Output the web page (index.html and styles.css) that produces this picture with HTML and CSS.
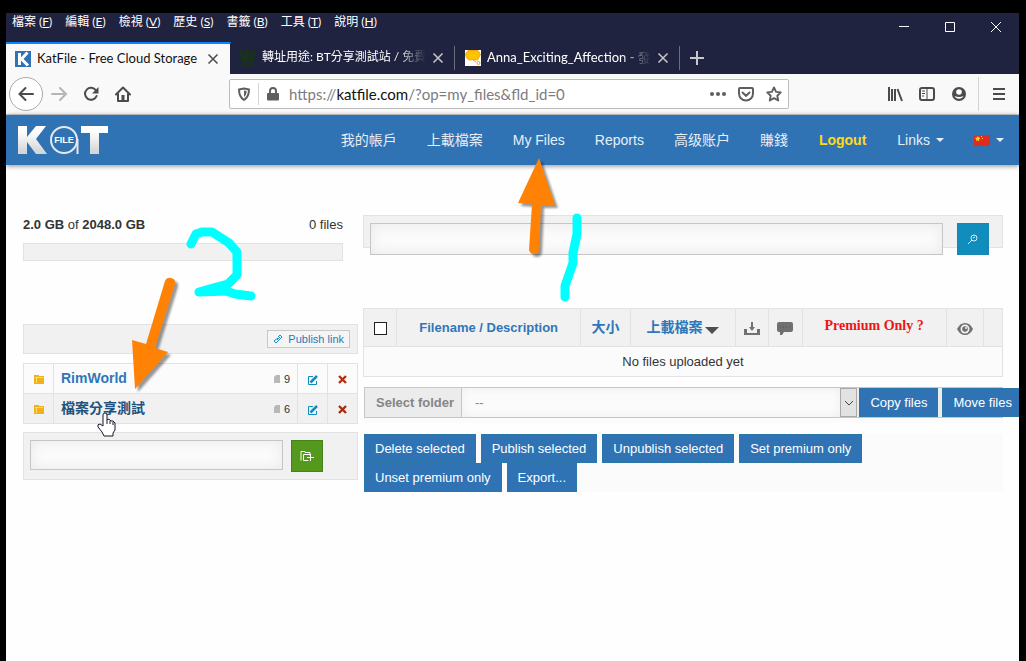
FILE: index.html
```html
<!DOCTYPE html>
<html lang="zh-Hant">
<head>
<meta charset="utf-8">
<title>KatFile - Free Cloud Storage</title>
<link rel="stylesheet" href="styles.css">
</head>
<body>
<div class="window">
  <header class="chrome">
    <div class="titlebar">
      <nav class="menus">
        <button>檔案 (<u>F</u>)</button><button>編輯 (<u>E</u>)</button><button>檢視 (<u>V</u>)</button><button>歷史 (<u>S</u>)</button><button>書籤 (<u>B</u>)</button><button>工具 (<u>T</u>)</button><button>說明 (<u>H</u>)</button>
      </nav>
      <div class="controls">
        <button aria-label="Minimize"><svg width="12" height="12"><path d="M1 5.5h10" stroke="#fff"/></svg></button>
        <button aria-label="Maximize"><svg width="12" height="12"><path d="M1.5 1.5h9v9h-9z" fill="none" stroke="#fff"/></svg></button>
        <button aria-label="Close"><svg width="12" height="12"><path d="M1 1l10 10M11 1L1 11" stroke="#fff"/></svg></button>
      </div>
    </div>
    <div class="tabs">
      <div class="tab active">
        <svg class="favicon" width="16" height="16"><path fill="#2f72b5" d="M0 0h16v16H0z"/><path fill="none" stroke="#fff" stroke-width="3" d="M4.500 2v12M12.500 1.500L6.500 8l6.500 6.500"/></svg>
        <span class="tab-title">KatFile - Free Cloud Storage</span>
        <button class="tab-close" aria-label="Close tab"><svg width="12" height="12"><path d="M1.500 1.500l9 9M10.500 1.500l-9 9" stroke="#4a4a4f" stroke-width="1.500"/></svg></button>
      </div>
      <div class="tab">
        <svg class="favicon" width="16" height="16"><path fill="none" stroke="#193414" stroke-width="2" d="M1 1.500h5v4H1zM9 1.500h5v4H9zM1 8h13M3 10.500h10v4H3zM7.500 1v7"/></svg>
        <span class="tab-title fade small">轉址用途: BT分享測試站 / 免費</span>
        <button class="tab-close" aria-label="Close tab"><svg width="12" height="12"><path d="M1.500 1.500l9 9M10.500 1.500l-9 9" stroke="#c8c8cc" stroke-width="1.500"/></svg></button>
      </div>
      <div class="tab">
        <svg class="favicon" width="16" height="16"><path fill="#fff" d="M0 0h16v16H0z"/><path fill="#ffc400" stroke="#f6a313" d="M3 .5h10l2.500 4-2 3.500-1 2-4-.5-4 .5-3-2-1-4z"/><circle cx="13.500" cy="13" r="1.500" fill="#fff" stroke="#f6a313"/><path d="M8 10l3 2" stroke="#f6a313"/></svg>
        <span class="tab-title fade">Anna_Exciting_Affection - 發</span>
        <button class="tab-close" aria-label="Close tab"><svg width="12" height="12"><path d="M1.500 1.500l9 9M10.500 1.500l-9 9" stroke="#c8c8cc" stroke-width="1.500"/></svg></button>
      </div>
      <button class="newtab" aria-label="New tab"><svg width="14" height="14"><path d="M7 0v14M0 7h14" stroke="#c8c8cc" stroke-width="2"/></svg></button>
    </div>
    <div class="toolbar">
      <div class="history">
        <button class="back" aria-label="Back"><svg width="18" height="16"><path d="M8.500 2L2.500 8l6 6M3 8h13" fill="none" stroke="#4a4a4f" stroke-width="2" stroke-linecap="round"/></svg></button>
        <button aria-label="Forward"><svg width="18" height="16"><path d="M10 2l6 6-6 6M15.500 8H2" fill="none" stroke="#b5b5b8" stroke-width="2" stroke-linecap="round"/></svg></button>
        <button aria-label="Reload"><svg width="16" height="16"><path d="M13 4.500A6 6 0 1 0 13.600 10" fill="none" stroke="#4a4a4f" stroke-width="2" stroke-linecap="round"/><path d="M15.500 1v6.500H9z" fill="#4a4a4f"/></svg></button>
        <button aria-label="Home"><svg width="18" height="16"><path d="M2 8.500L9 1.500l7 7M4 8v7h10V8" fill="none" stroke="#4a4a4f" stroke-width="2" stroke-linecap="round" stroke-linejoin="round"/><path d="M7.500 9h3v5h-3z" fill="#4a4a4f"/></svg></button>
      </div>
      <div class="address">
        <button class="shield" aria-label="Tracking protection"><svg width="14" height="16"><path d="M7 2.500l5 1c0 5-1 8-5 10.500C3 11.500 2 8.500 2 3.500z" fill="none" stroke="#5e5e62" stroke-width="2" stroke-linejoin="round"/><path d="M7 4.500v6.500c2-1.500 2.500-3 2.600-6z" fill="#5e5e62"/></svg></button>
        <svg class="lock" width="14" height="16"><rect x="1" y="7" width="12" height="7.500" rx="1" fill="#5e5e62"/><path d="M4 8V5a3 3 0 0 1 6 0v3" fill="none" stroke="#5e5e62" stroke-width="2"/></svg>
        <a class="url" href="#">https://<b>katfile.com</b>/?op=my_files&amp;fld_id=0</a>
        <div class="page-actions">
          <button aria-label="Page actions"><svg width="18" height="16" fill="#5e5e62"><circle cx="3" cy="8" r="2"/><circle cx="9" cy="8" r="2"/><circle cx="15" cy="8" r="2"/></svg></button>
          <button aria-label="Save to Pocket"><svg width="18" height="16" fill="none" stroke="#5e5e62" stroke-width="2" stroke-linecap="round"><path d="M3 2h12q1 0 1 1v4.500a7 7 0 0 1-14 0V3q0-1 1-1z"/><path d="M5.500 6.500L9 9.800l3.500-3.300"/></svg></button>
          <button aria-label="Bookmark"><svg width="18" height="16" viewBox="0 0 18 17"><path d="M9 1.500l2.200 4.700 5 .6-3.700 3.500 1 5.100L9 12.900l-4.500 2.500 1-5.100-3.700-3.500 5-.6z" fill="none" stroke="#5e5e62" stroke-width="2" stroke-linejoin="round"/></svg></button>
        </div>
      </div>
      <div class="tools">
        <button aria-label="Library"><svg width="16" height="16"><path d="M2 1v14M5 3v12M8 3v12M10.500 3L15 15" stroke="#4a4a4f" stroke-width="2"/></svg></button>
        <button aria-label="Sidebar"><svg width="16" height="16"><rect x="1" y="2" width="14" height="12" rx="2" fill="none" stroke="#4a4a4f" stroke-width="2"/><path d="M8 2v12M3 5h3M3 7.500h3M3 10h2" stroke="#4a4a4f"/></svg></button>
        <button aria-label="Account"><svg width="16" height="16"><circle cx="8" cy="8" r="7" fill="#4a4a4f"/><circle cx="8" cy="6" r="2.800" fill="#fff"/><path d="M3.500 10q1.200 2.800 4.500 2.800t4.500-2.800q-2 1-4.500 1t-4.500-1z" fill="#fff"/></svg></button>
        <button class="hamburger" aria-label="Open menu"><svg width="14" height="16"><path d="M1 3h12M1 8h12M1 13h12" stroke="#4a4a4f" stroke-width="2"/></svg></button>
      </div>
    </div>
  </header>

  <div class="site-nav">
    <a class="logo" href="#" aria-label="KatFile">
      <svg width="92" height="32">
        <defs><linearGradient id="metal" x1="0" y1="0" x2="0" y2="1"><stop offset="0.200" stop-color="#fff"/><stop offset="0.900" stop-color="#d4d7da"/></linearGradient></defs>
        <path fill="url(#metal)" d="M1 2h9v11L19 2h10L19 15l11 15H19l-9-12v12H1zM64 2h27v7H82v21h-9V9h-9z"/>
        <circle cx="47" cy="16" r="13" fill="none" stroke="#e6e9ec" stroke-width="2"/>
        <path d="M60.500 15v15" stroke="#e6e9ec" stroke-width="2"/>
        <text x="47" y="19" text-anchor="middle" class="logo-file">FILE</text>
      </svg>
    </a>
    <nav class="links">
      <a href="#">我的帳戶</a><a href="#">上載檔案</a><a href="#">My Files</a><a href="#">Reports</a><a href="#">高级账户</a><a href="#">賺錢</a><a href="#" class="logout">Logout</a>
      <a href="#">Links<i class="caret"></i></a>
      <a href="#" aria-label="中文"><svg width="16" height="11"><path fill="#e22a20" d="M0 0h16v11H0z"/><path fill="#ffd42a" d="M1 3l2-.4L4 1l.8 1.600 1.700.4L5 4.300l.3 2L3.600 5.200 2 6l.4-1.800zM7 1h1v1H7zM8 3h1v1H8z"/></svg><i class="caret"></i></a>
    </nav>
  </div>

  <main class="content">
    <aside class="side">
      <div class="usage"><span><b>2.0 GB</b> of <b>2048.0 GB</b></span><span>0 files</span></div>
      <div class="quota"></div>
      <div class="panel publish">
        <button class="publish-link"><svg width="10" height="10" fill="none" stroke="#1a8fc0"><path d="M4 6l3-3M5 3l2-2 2 2-3 3M5 4L1 7l2 2 3-3"/></svg>Publish link</button>
      </div>
      <table class="folders">
        <tr>
          <td class="folder-icon"><svg width="10" height="9"><path fill="#f1b213" d="M0 0h5v1h5v8H0z"/><path d="M1 2.500h8M2.500 3v5" fill="none" stroke="#fbd877"/></svg></td>
          <td><a href="#">RimWorld</a></td>
          <td class="count"><svg width="6" height="8"><path fill="#b8b8b8" d="M2 0h4v8H0V2z"/></svg>9</td>
          <td class="act"><button aria-label="Edit RimWorld"><svg width="10" height="10" fill="none" stroke="#0e8cc0"><path d="M5 1.500H.5v8h8V6"/><path stroke-width="2.500" d="M2.500 7.500L9 1"/></svg></button></td>
          <td class="act"><button aria-label="Delete RimWorld"><svg width="9" height="9"><path d="M1 1l7 7M8 1L1 8" stroke="#b23112" stroke-width="2.400"/></svg></button></td>
        </tr>
        <tr>
          <td class="folder-icon"><svg width="10" height="9"><path fill="#f1b213" d="M0 0h5v1h5v8H0z"/><path d="M1 2.500h8M2.500 3v5" fill="none" stroke="#fbd877"/></svg></td>
          <td><a href="#" class="hovered">檔案分享測試</a></td>
          <td class="count"><svg width="6" height="8"><path fill="#b8b8b8" d="M2 0h4v8H0V2z"/></svg>6</td>
          <td class="act"><button aria-label="Edit folder"><svg width="10" height="10" fill="none" stroke="#0e8cc0"><path d="M5 1.500H.5v8h8V6"/><path stroke-width="2.500" d="M2.500 7.500L9 1"/></svg></button></td>
          <td class="act"><button aria-label="Delete folder"><svg width="9" height="9"><path d="M1 1l7 7M8 1L1 8" stroke="#a22e13" stroke-width="2.400"/></svg></button></td>
        </tr>
      </table>
      <form class="panel new-folder">
        <input class="field" type="text" aria-label="New folder name">
        <button class="create" type="button" aria-label="Create folder"><svg width="14" height="11" fill="none" stroke="#fff"><path d="M1 9.500v-9h4v1h5v3M3.500 9.500v-6H10M3.500 9.500h5"/><path d="M7 6.500h7M10.500 3v7"/></svg></button>
      </form>
    </aside>

    <section class="files">
      <form class="search">
        <input class="field" type="text" aria-label="Search files">
        <button class="go" type="button" aria-label="Search"><svg width="10" height="10" fill="none" stroke="#d8f0f8"><circle cx="6" cy="4" r="3"/><path d="M0 10l4-4M5 4l2-1"/></svg></button>
      </form>
      <table class="list">
        <colgroup><col class="w5"><col class="w29"><col class="w8"><col class="w16"><col class="w5"><col class="w5"><col class="w23"><col class="w6"><col class="w3"></colgroup>
        <tr>
          <th><input type="checkbox" aria-label="Select all"></th>
          <th><a href="#">Filename / Description</a></th>
          <th><a href="#" class="cjk">大小</a></th>
          <th><a href="#" class="cjk">上載檔案<i class="sort"></i></a></th>
          <th><svg width="16" height="14" fill="#707073"><path d="M0 7h3v4h10V7h3v6H0zM7 0h2v5h2L8 9 5 5h2z"/></svg></th>
          <th><svg width="16" height="14" fill="#707073"><path d="M2 0h12q2 0 2 2v6q0 2-2 2H7l-2 3H3v-3H2Q0 10 0 8V2q0-2 2-2z"/><path d="M3 5h1M6 5h1M9 5h1M12 5h1" stroke="#555"/></svg></th>
          <th class="premium"><span>Premium Only</span> ?</th>
          <th><svg width="16" height="14"><path fill="#707073" d="M0 7q3-6 8-6t8 6q-3 6-8 6T0 7z"/><circle cx="8" cy="7" r="4.500" fill="#f1f1f1"/><circle cx="8" cy="7" r="2.800" fill="#707073"/><circle cx="9" cy="6" r="1" fill="#f1f1f1"/></svg></th>
          <th></th>
        </tr>
        <tr><td colspan="9">No files uploaded yet</td></tr>
      </table>
      <div class="move">
        <label for="folder">Select folder</label>
        <div class="select-wrap">
          <select id="folder"><option>--</option></select>
          <span class="arrow"><svg width="10" height="6"><path d="M1 1l4 4 4-4" fill="none" stroke="#444"/></svg></span>
        </div>
        <button class="btn">Copy files</button>
        <button class="btn">Move files</button>
      </div>
      <div class="actions">
        <div><button class="btn">Delete selected</button><button class="btn">Publish selected</button><button class="btn">Unpublish selected</button><button class="btn">Set premium only</button></div>
        <div><button class="btn">Unset premium only</button><button class="btn">Export...</button></div>
      </div>
    </section>
  </main>
</div>

<svg class="ink" width="700" height="470" aria-hidden="true">
  <g fill="#ff8205" class="arrows">
    <path d="M539 158L518 203l14 1-3 46q1 4 5 4t5-4l2-45 14 0z"/>
    <path d="M165 281q2-4 6-3 5 1 4 6l-20 64 13 4-33 37-3-49 14 4z"/>
  </g>
  <g fill="none" stroke="#0ff" stroke-width="9" stroke-linecap="round" stroke-linejoin="round">
    <path d="M191 244l5-10 6-2 10 0 17 11 8 9v23l-9 9-15 4-14 4 27-1 9 3 16 2"/>
    <path d="M577 218v16l-4 19v10l-8 23v11"/>
  </g>
  <path d="M103 426V415q0-2 2-2t2 2v5l1-1 2 1 1 1 2 0 1 1 1 1v7l-2 3v3h-9l-2-4-4-5q-1-3 2-3z" fill="#fff" stroke="#16162a"/>
  <path d="M107 420v4M110 421v3M113 422v3" stroke="#16162a"/>
</svg>
</body>
</html>
```

FILE: styles.css
```css
* { box-sizing: border-box; }
html { background: #000; }
body {
  margin: 0;
  padding: 13px 7px 0 6px;
  height: 100vh;
  overflow: hidden;
  font: 13px/20px "Liberation Sans", "Noto Sans CJK TC", sans-serif;
  color: #333;
}
button { font: inherit; color: inherit; background: none; border: 0; padding: 0; display: inline-flex; align-items: center; justify-content: center; }
a { color: #2f77b8; text-decoration: none; }
svg { display: block; flex: none; }
table { border-collapse: collapse; width: 100%; }

.window { display: flex; flex-direction: column; height: 100%; background: #fefefe; overflow: hidden; }
.chrome { background: #202340; color: #fff; font-family: Lato, "Noto Sans CJK TC", sans-serif; }
.titlebar { display: flex; justify-content: space-between; height: 29px; font-size: 12px; }
.menus { display: flex; gap: 13px; padding: 0 6px; height: 18px; line-height: 18px; white-space: nowrap; }
.menus button { display: block; }
.controls { display: flex; height: 28px; }
.controls button { width: 46px; }

.tabs { display: flex; height: 32px; }
.tab { display: flex; align-items: center; width: 225px; padding: 0 11px 0 9px; gap: 6px; border-right: 1px solid #202340; position: relative; }
.tab:nth-child(2)::after, .tab:nth-child(3)::after { content: ""; position: absolute; right: 0; top: 4px; bottom: 4px; width: 1px; background: #6c6d80; }
.tab.active { background: #f9f9fa; color: #111; border-top: 2px solid #0a84ff; }
.tab-title { flex: 1; overflow: hidden; white-space: nowrap; line-height: 18px; padding-bottom: 2px; }
.tab-title.small { font-size: 12px; }
.fade { -webkit-mask-image: linear-gradient(to left, transparent, #000 30px); mask-image: linear-gradient(to left, transparent, #000 30px); }
.newtab { width: 32px; }

.toolbar { display: flex; align-items: center; height: 41px; background: #f9f9fa; color: #4a4a4f; border-bottom: 1px solid #d2d2d4; }
.history { display: flex; align-items: center; width: 223px; flex: none; padding-left: 3px; }
.history button { width: 32px; height: 32px; }
.history .back { width: 34px; height: 34px; border: 1px solid #aaa; border-radius: 50%; background: #fff; }
.address { flex: none; width: 55.3%; display: flex; align-items: center; height: 30px; border: 1px solid #bcbcbe; border-radius: 2px; background: #fff; }
.shield { width: 29px; height: 22px; border-right: 1px solid #d4d4d6; }
.lock { margin: 0 9px 0 7px; }
.url { flex: 1; font-size: 15px; color: #7c7c80; white-space: nowrap; }
.url b { font-weight: 400; color: #111; }
.page-actions { display: flex; gap: 10px; padding-right: 5px; }
.tools { display: flex; flex: 1; justify-content: flex-end; align-items: center; gap: 16px; }
.hamburger { width: 41px; height: 34px; margin-left: -5px; border-left: 1px solid #d4d4d6; }

.site-nav { display: flex; align-items: center; justify-content: space-between; flex: none; height: 50px; padding-left: 11px; background: #2f73b5; box-shadow: 0 1px 5px rgba(0,0,0,.45); position: relative; }
.logo-file { font: bold 9px "Liberation Sans", sans-serif; fill: #fff; }
.links { display: flex; font-size: 14px; white-space: nowrap; }
.links a { display: flex; align-items: center; padding: 0 15px; color: #e8eef5; }
.links .logout { color: #ffd915; font-weight: 700; padding: 0 16px; }
.caret { border: 4px solid transparent; border-top-color: currentColor; border-bottom: 0; margin-left: 6px; }

.content { display: grid; grid-template-columns: 335fr 640fr; gap: 5px; padding: 50px 16px 0 17px; }
.usage { display: flex; justify-content: space-between; margin-right: 15px; }
.quota { height: 18px; margin: 8px 15px 63px 0; background: #f1f1f1; border: 1px solid #e2e2e2; }
.panel { background: #f1f1f1; border: 1px solid #e2e2e2; }
.publish { display: flex; justify-content: flex-end; height: 30px; padding: 5px 7px; }
.publish-link { gap: 5px; padding: 0 5px; border: 1px solid #c8c8c8; color: #2f77b8; font-size: 11px; background: #f5f5f5; height: 18px; }
.folders { margin: 9px 0 8px; background: #fbfbfb; border: 1px solid #e2e2e2; }
.folders tr { height: 30px; border-bottom: 1px solid #e2e2e2; }
.folders tr:last-child { background: #f1f1f1; }
.folders td { padding: 0 0 0 7px; }
.folders a { font-weight: 700; font-size: 14px; }
.folders .hovered { color: #23527c; }
.folders .folder-icon { width: 30px; padding: 2px 0 0 10px; border-right: 1px solid #e2e2e2; }
.folders .count { text-align: right; padding-right: 7px; font-size: 11px; }
.count svg { display: inline-block; margin-right: 4px; }
.folders .act { width: 30px; padding: 2px 0 0; text-align: center; border-left: 1px solid #e2e2e2; }
.act button { height: 20px; vertical-align: middle; }
.new-folder { display: flex; gap: 8px; height: 48px; padding: 7px 34px 7px 6px; }
.field { flex: 1; min-width: 0; height: 30px; border: 1px solid #c6c6c6; background: #fbfbfb; box-shadow: inset 0 0 14px #e8e8e8; padding: 0 8px; font: inherit; }
.create { width: 32px; height: 32px; background: #55991c; border: 1px solid #48821a; }

.search { display: flex; gap: 14px; height: 33px; padding: 7px 13px 0 6px; background: #f1f1f1; border: 1px solid #e2e2e2; }
.search .field { height: 32px; }
.go { width: 32px; height: 32px; flex: none; background: #108dbd; border: 1px solid #1786b0; }
.list { margin-top: 60px; table-layout: fixed; background: #fbfbfb; text-align: center; }
.list, .list th, .list td { border: 1px solid #e2e2e2; }
.list th { height: 38px; padding: 0; background: #f1f1f1; white-space: nowrap; }
.list td { height: 30px; padding: 0; }
.list th svg { margin: 3px auto 0; }
.list .cjk { font-size: 14px; }
.list input { appearance: none; width: 13px; height: 13px; margin: 0; border: 1px solid #222; background: #fff; vertical-align: middle; }
.w3 { width: 3%; } .w5 { width: 5.2%; } .w6 { width: 5.8%; } .w8 { width: 7.8%; }
.w16 { width: 16.4%; } .w23 { width: 22.5%; } .w29 { width: 28.7%; }
.sort { display: inline-block; border: 7px solid transparent; border-top-color: #4f4f52; border-bottom: 0; margin-left: 3px; vertical-align: -2px; }
.list .premium { font: bold 14px/20px "Liberation Serif", serif; color: #f01414; padding-bottom: 4px; }

.move { display: flex; align-items: center; gap: 4px; height: 31px; margin: 10px 0 16px 1px; border: solid #c6c6c6; border-width: 1px 0 1px 1px; background: #ececec; box-shadow: 0 5px #fbfbfb; white-space: nowrap; }
.move label { width: 96px; flex: none; padding-left: 11px; font-weight: 700; color: #858585; }
.select-wrap { display: flex; flex: 1; height: 29px; margin-left: -4px; margin-right: -2px; border-left: 1px solid #c6c6c6; }
.select-wrap select { appearance: none; flex: 1; border: 0; padding: 0 13px; font: inherit; color: #888; background: #fbfbfb; box-shadow: inset 0 0 10px #eee; }
.arrow { display: flex; width: 17px; align-items: center; justify-content: center; border: 1px solid #aaa; background: #e2e2e2; }
.btn { height: 29px; padding: 0 10px; background: #2f73b5; border: 1px solid #2a77a8; color: #fff; white-space: nowrap; }
.move .btn { flex: none; }
.move .btn:last-child { margin-right: -20px; }
.actions { margin-left: 1px; background: #fbfbfb; }
.actions div { display: flex; gap: 5px; }

.ink { position: absolute; left: 0; top: 0; pointer-events: none; }
.arrows { filter: drop-shadow(3px 3px 1px rgba(0,0,0,.4)); }
```
